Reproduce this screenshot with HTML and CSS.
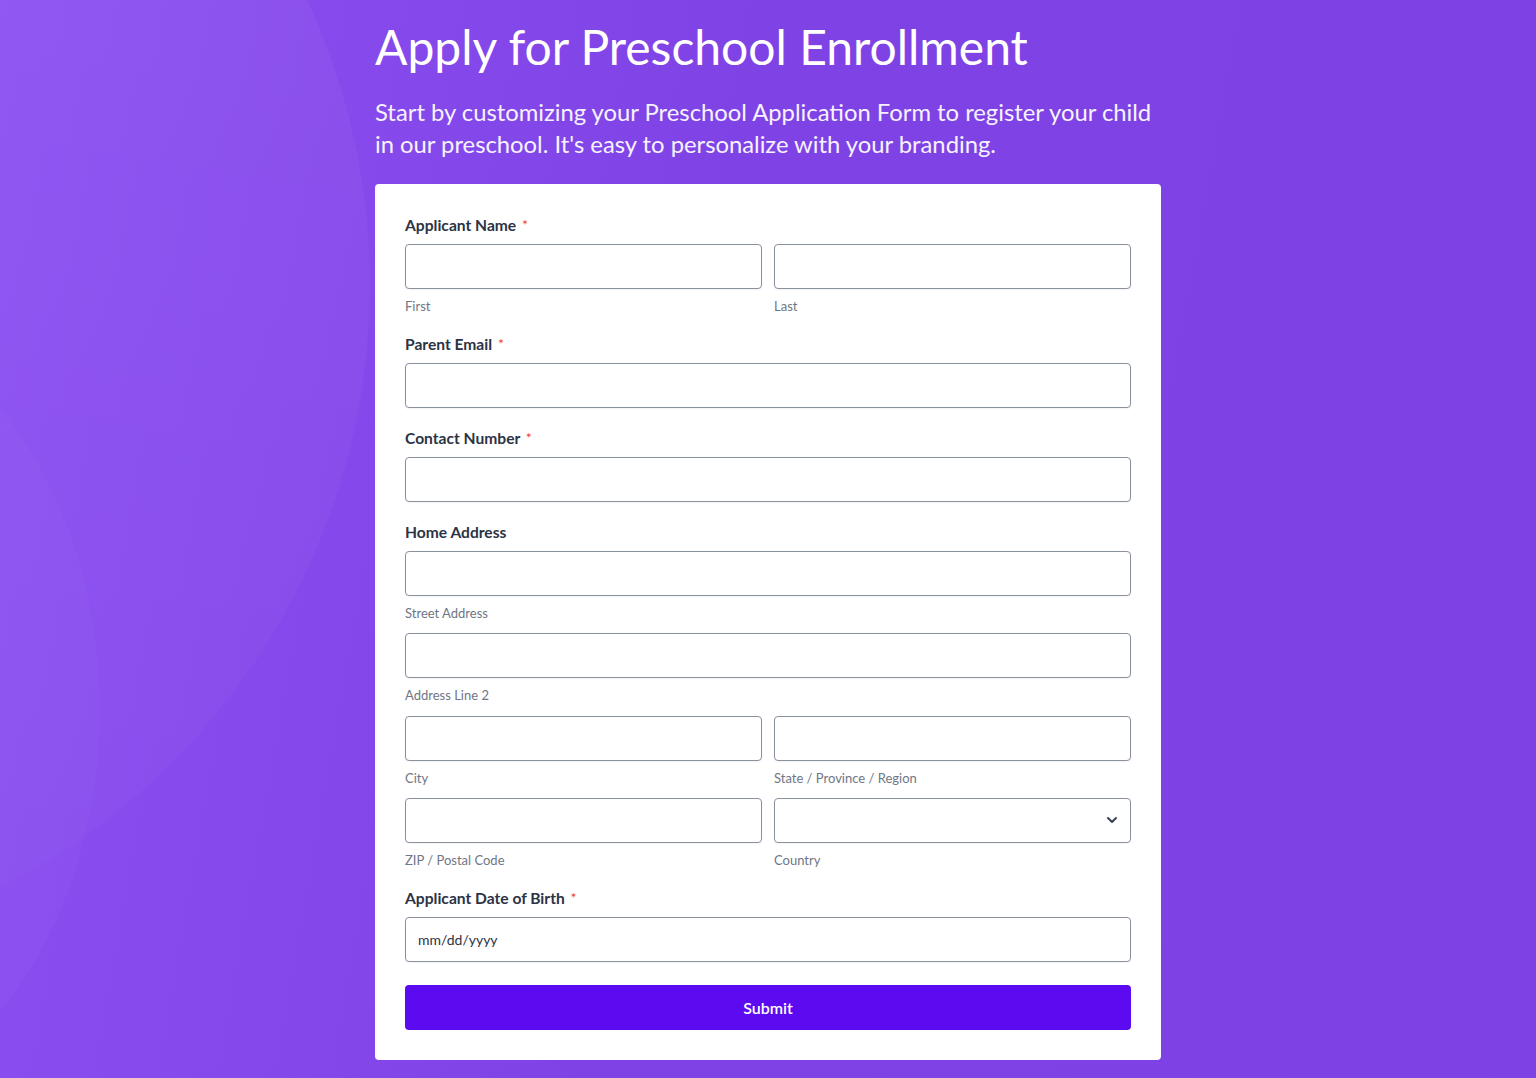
FILE: index.html
```html
<!DOCTYPE html>
<html lang="en">
<head>
<meta charset="utf-8">
<title>Apply for Preschool Enrollment</title>
<link rel="stylesheet" href="styles.css">
</head>
<body>
<div class="bg-shape shape-a"></div>
<div class="bg-shape shape-b"></div>
<main class="page">
  <h1 class="title">Apply for Preschool Enrollment</h1>
  <p class="intro">Start by customizing your Preschool Application Form to register your child in our preschool. It's easy to personalize with your branding.</p>
  <form class="card">
    <div class="field">
      <div class="label">Applicant Name <span class="req">*</span></div>
      <div class="row">
        <div class="col"><div class="input"></div><div class="sub">First</div></div>
        <div class="col"><div class="input"></div><div class="sub">Last</div></div>
      </div>
    </div>
    <div class="field">
      <div class="label">Parent Email <span class="req">*</span></div>
      <div class="input"></div>
    </div>
    <div class="field">
      <div class="label">Contact Number <span class="req">*</span></div>
      <div class="input"></div>
    </div>
    <div class="field">
      <div class="label">Home Address</div>
      <div class="stack">
        <div class="col"><div class="input"></div><div class="sub">Street Address</div></div>
        <div class="col"><div class="input"></div><div class="sub">Address Line 2</div></div>
        <div class="row">
          <div class="col"><div class="input"></div><div class="sub">City</div></div>
          <div class="col"><div class="input"></div><div class="sub">State / Province / Region</div></div>
        </div>
        <div class="row">
          <div class="col"><div class="input"></div><div class="sub">ZIP / Postal Code</div></div>
          <div class="col"><div class="input select"><svg class="chev" width="12" height="8" viewBox="0 0 12 8"><path d="M2 2 L6 6 L10 2" fill="none" stroke="#3a4153" stroke-width="2" stroke-linecap="round" stroke-linejoin="round"/></svg></div><div class="sub">Country</div></div>
        </div>
      </div>
    </div>
    <div class="field">
      <div class="label">Applicant Date of Birth <span class="req">*</span></div>
      <div class="input date">mm/dd/yyyy</div>
    </div>
    <button type="button" class="submit">Submit</button>
  </form>
</main>
</body>
</html>
```
FILE: styles.css
```css
html, body {
  margin: 0;
  padding: 0;
}
body {
  min-height: 1078px;
  font-family: Lato, "Open Sans", sans-serif;
  background: linear-gradient(100deg, #8c51f2 0%, #8649eb 22%, #7f43e5 45%, #7d41e4 100%);
  overflow: hidden;
  position: relative;
}
.bg-shape {
  position: absolute;
  pointer-events: none;
}
.shape-a {
  left: -980px;
  top: -390px;
  width: 1350px;
  height: 1350px;
  border-radius: 50%;
  background: linear-gradient(180deg, rgba(255,255,255,0.05), rgba(255,255,255,0.015));
}
.shape-b {
  left: -520px;
  top: 300px;
  width: 620px;
  height: 820px;
  border-radius: 50%;
  background: rgba(255,255,255,0.02);
}
.page {
  position: relative;
  width: 786px;
  margin: 0 auto;
  padding-top: 18px;
}
.title {
  margin: 0;
  font-size: 48px;
  line-height: 58px;
  font-weight: 400;
  color: #ffffff;
}
.intro {
  margin: 20px 0 0;
  font-size: 23.8px;
  line-height: 32px;
  color: #f6f2ff;
  font-weight: 400;
}
.card {
  margin-top: 24px;
  background: #ffffff;
  border-radius: 4px;
  padding: 30px 30px 30px;
  display: flex;
  flex-direction: column;
}
.field {
  display: flex;
  flex-direction: column;
  margin-bottom: 19px;
}
.label {
  font-size: 15.6px;
  line-height: 22px;
  font-weight: 700;
  color: #2c3345;
  margin-bottom: 8px;
}
.req {
  color: #f23a3c;
  font-size: 14px;
  font-weight: 400;
  margin-left: 2px;
  vertical-align: 1px;
}
.row {
  display: grid;
  grid-template-columns: 1fr 1fr;
  column-gap: 12px;
}
.stack {
  display: flex;
  flex-direction: column;
  row-gap: 12.3px;
}
.col {
  display: flex;
  flex-direction: column;
}
.input {
  box-sizing: border-box;
  height: 45px;
  border: 1px solid #8a919e;
  border-radius: 4px;
  background: #ffffff;
  box-shadow: 0 1px 2px rgba(44, 51, 69, 0.06);
}
.select {
  display: flex;
  align-items: center;
  justify-content: flex-end;
  padding-right: 12px;
}
.date {
  display: flex;
  align-items: center;
  padding-left: 12px;
  font-size: 14px;
  color: #2c3345;
}
.sub {
  margin-top: 9px;
  font-size: 13px;
  line-height: 16px;
  color: #6f7686;
}
.submit {
  margin-top: 4px;
  height: 45px;
  border: none;
  border-radius: 4px;
  background: #5c0aef;
  color: #ffffff;
  font-family: Lato, "Open Sans", sans-serif;
  font-size: 16px;
  font-weight: 600;
  cursor: pointer;
}
```
